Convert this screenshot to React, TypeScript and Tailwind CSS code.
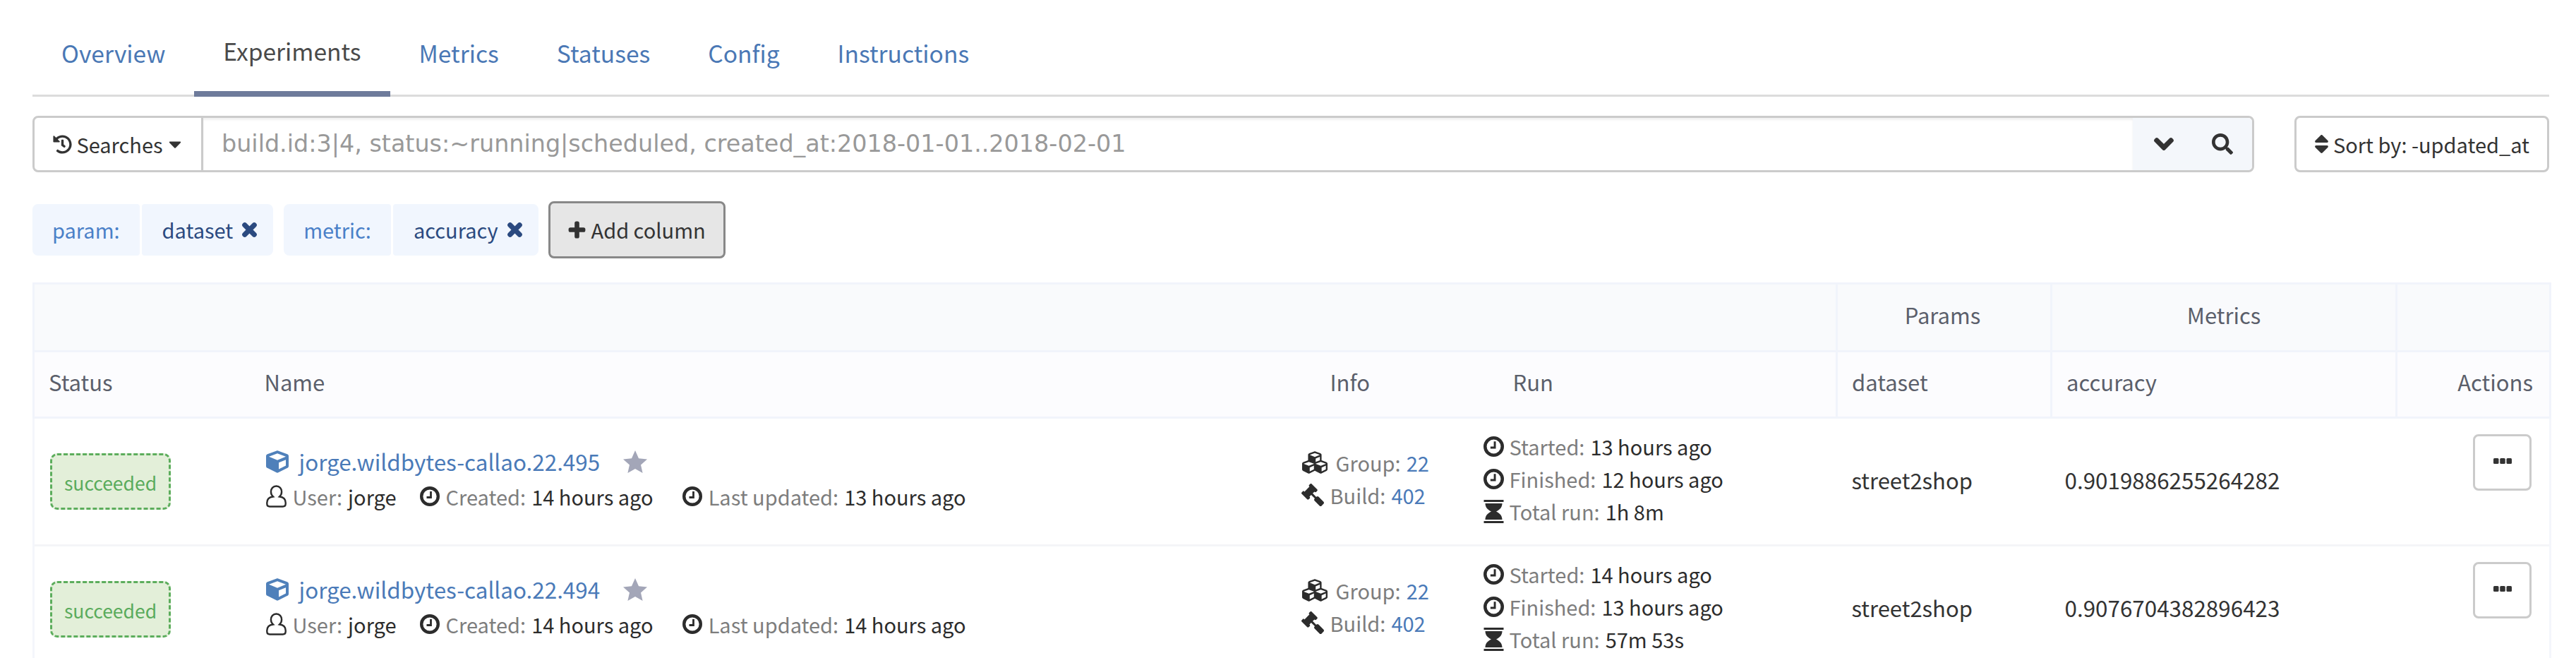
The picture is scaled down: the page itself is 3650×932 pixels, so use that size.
import {
  FaCaretDown,
  FaChevronDown,
  FaCube,
  FaCubes,
  FaGavel,
  FaHistory,
  FaPlus,
  FaSearch,
  FaSort,
} from 'react-icons/fa'

const TABS = ['Overview', 'Experiments', 'Metrics', 'Statuses', 'Config', 'Instructions']

const ROWS = [
  {
    name: 'jorge.wildbytes-callao.22.495',
    updated: '13 hours ago',
    started: '13 hours ago',
    finished: '12 hours ago',
    total: '1h 8m',
    accuracy: '0.9019886255264282',
  },
  {
    name: 'jorge.wildbytes-callao.22.494',
    updated: '14 hours ago',
    started: '14 hours ago',
    finished: '13 hours ago',
    total: '57m 53s',
    accuracy: '0.9076704382896423',
  },
]

// font-awesome 4 shapes that the icon packages no longer carry
function ClockIcon({ className }: { className: string }) {
  return (
    <svg viewBox="0 0 28 28" className={className} fill="none" stroke="currentColor">
      <circle cx="14" cy="14" r="11.8" strokeWidth="4.4" />
      <path d="M15.5 7v8.5H9.5" strokeWidth="2.8" />
    </svg>
  )
}

function UserIcon({ className }: { className: string }) {
  return (
    <svg viewBox="0 0 29 32" className={className} fill="none" stroke="currentColor" strokeWidth="2.4">
      <path d="M14.5 1.5c-4.6 0-7.6 3.6-7.6 8 0 3 1.2 5.4 3 7-4.6.6-8.6 2.6-8.6 8.6v1.4c0 2.4 1.6 4 4 4h18.400c2.400 0 4-1.600 4-4v-1.400c0-6-4-8-8.600-8.600 1.800-1.600 3-4 3-7 0-4.400-3-8-7.600-8z" />
    </svg>
  )
}

function StarIcon({ className }: { className: string }) {
  return (
    <svg viewBox="0 0 34 32" className={className} fill="currentColor">
      <path d="M17 0l5 11.200 12 1.300-9 8 2.600 11.500L17 26l-10.600 6L9 20.500l-9-8 12-1.300z" />
    </svg>
  )
}

function HourglassIcon({ className }: { className: string }) {
  return (
    <svg viewBox="0 0 28 33" className={className} fill="currentColor">
      <path d="M0 0h28v3H0zM0 30h28v3H0zM2 5h24c0 5-3 9-8.500 11.500C23 19 26 23 26 28H2c0-5 3-9 8.500-11.500C5 14 2 10 2 5z" />
    </svg>
  )
}

function CrossIcon({ className }: { className: string }) {
  return (
    <svg viewBox="0 0 24 24" className={className} fill="none" stroke="currentColor" strokeWidth="7.500" strokeLinecap="round">
      <path d="M5 5l14 14M19 5L5 19" />
    </svg>
  )
}

function DotsIcon({ className }: { className: string }) {
  return (
    <svg viewBox="0 0 26 8" className={className} fill="currentColor">
      <rect x="0" width="7.500" height="8" rx="1.500" />
      <rect x="9.250" width="7.500" height="8" rx="1.500" />
      <rect x="18.500" width="7.500" height="8" rx="1.500" />
    </svg>
  )
}

function Chip({ label, value }: { label: string; value: string }) {
  return (
    <div className="flex gap-[3px] text-[29px]">
      <span className="flex h-[73px] items-center rounded-l-[8px] rounded-r-[4px] bg-[#f1f6fe] px-[28px] text-[#4a80c8]">
        {label}
      </span>
      <span className="flex h-[73px] items-center gap-[12px] rounded-l-[4px] rounded-r-[8px] bg-[#f1f6fe] pl-[29px] pr-[22px] text-[#2b4a80]">
        {value}
        <CrossIcon className="h-[23px] w-[23px] text-[#2b4a80]" />
      </span>
    </div>
  )
}

function Meta({ icon, label, value }: { icon: React.ReactNode; label: string; value: string }) {
  return (
    <span className="flex items-center whitespace-nowrap text-[29px]">
      {icon}
      <span className="text-[#7d7d7d]">{label}</span>
      <span className="ml-[8px] text-[#2c2c2c]">{value}</span>
    </span>
  )
}

export default function App() {
  return (
    <div className="h-[932px] w-[3650px] overflow-hidden bg-white pl-[46px] pr-[38px] font-['Noto_Sans_CJK_SC',sans-serif] text-[30px] leading-[46px] text-[#333]">
      <nav className="flex h-[137px] items-end border-b-[3px] border-[#dcdcdc]">
        {TABS.map((tab) => (
          <a
            key={tab}
            className={
              tab === 'Experiments'
                ? 'relative -mb-[3px] flex h-[137px] items-center border-b-[8px] border-[#6e7b9b] px-[41px] pt-[14px] text-[33.600px] text-[#4a4a4a]'
                : 'flex h-[134px] items-center px-[41px] pt-[16px] text-[33.600px] text-[#4a78b5]'
            }
          >
            {tab}
          </a>
        ))}
      </nav>

      <div className="mt-[27px] flex items-stretch justify-between">
        <div className="flex h-[80px] w-[3148px] rounded-[8px] border-[3px] border-[#cbcbcb]">
          <button className="flex w-[239px] items-center justify-center gap-[6px] border-r-[3px] border-[#cbcbcb] text-[29px] text-[#333]">
            <FaHistory className="h-[27px] w-[27px]" />
            Searches
            <FaCaretDown className="h-[28px] w-[22px]" />
          </button>
          <div className="flex flex-1 items-center pl-[26px] font-['DejaVu_Sans',sans-serif] text-[33.400px] text-[#999] shadow-[inset_0_3px_3px_rgba(0,0,0,0.06)]">
            build.id:3|4, status:~running|scheduled, created_at:2018-01-01..2018-02-01
          </div>
          <div className="flex w-[169px] items-center rounded-r-[6px] bg-[#f4f7fb] pl-[29px]">
            <FaChevronDown className="h-[30px] w-[30px] text-[#333]" stroke="currentColor" strokeWidth={40} />
            <FaSearch className="ml-[53px] h-[30px] w-[30px] text-[#333]" />
          </div>
        </div>
        <button className="flex h-[80px] w-[361px] items-center justify-center gap-[6px] rounded-[8px] border-[3px] border-[#cbcbcb] text-[29px] text-[#333]">
          <FaSort className="h-[36px] w-[21px]" />
          Sort by: -updated_at
        </button>
      </div>

      <div className="mt-[41px] flex h-[80px] items-center gap-[15px]">
        <Chip label="param:" value="dataset" />
        <Chip label="metric:" value="accuracy" />
        <button className="-ml-[1px] flex h-[81px] w-[251px] items-center justify-center gap-[8px] rounded-[8px] border-[3px] border-[#888] bg-[#e6e6e6] text-[29px] text-[#333]">
          <FaPlus className="h-[25px] w-[25px]" stroke="currentColor" strokeWidth={40} />
          Add column
        </button>
      </div>

      <table className="mt-[35px] w-[3566px] table-fixed border-collapse">
        <colgroup>
          <col className="w-[305px]" />
          <col className="w-[1468px]" />
          <col className="w-[259px]" />
          <col className="w-[523px]" />
          <col className="w-[304px]" />
          <col className="w-[489px]" />
          <col className="w-[218px]" />
        </colgroup>
        <thead className="bg-[#f9fafc] text-[31px] font-normal text-[#5b5f6b]">
          <tr className="h-[96px] border-b-[3px] border-[#f1f4fb]">
            <th colSpan={4} className="border-x-[3px] border-t-[3px] border-[#f1f4fb]" />
            <th className="border-x-[3px] border-t-[3px] border-[#f1f4fb] pb-[8px] pr-[4px] font-normal">Params</th>
            <th className="border-x-[3px] border-t-[3px] border-[#f1f4fb] pb-[8px] font-normal">Metrics</th>
            <th className="border-x-[3px] border-t-[3px] border-[#f1f4fb]" />
          </tr>
          <tr className="h-[94px] border-b-[3px] border-[#f1f4fb] bg-[#fcfcfe]">
            <th className="border-l-[3px] border-[#f1f4fb] pb-[8px] pl-[20px] text-left font-normal">Status</th>
            <th className="pb-[8px] pl-[22px] text-left font-normal">Name</th>
            <th className="pb-[8px] pl-[64px] text-left font-normal">Info</th>
            <th className="pb-[8px] pl-[64px] text-left font-normal">Run</th>
            <th className="border-l-[3px] border-[#f1f4fb] pb-[8px] pl-[20px] text-left font-normal">dataset</th>
            <th className="border-l-[3px] border-[#f1f4fb] pb-[8px] pl-[20px] text-left font-normal">accuracy</th>
            <th className="border-x-[3px] border-[#f1f4fb] pb-[8px] pr-[23px] text-right font-normal">Actions</th>
          </tr>
        </thead>
        <tbody>
          {ROWS.map((row) => (
            <tr key={row.name} className="h-[181px] border-b-[3px] border-[#f4f5f8]">
              <td className="border-l-[3px] border-[#f4f6fb] pl-[22px]">
                <span className="flex h-[80px] w-[171px] items-center justify-center rounded-[10px] border-[3px] border-dashed border-[#5cad5c] bg-[#e3efd9] pt-[4px] text-[26.500px] text-[#5aab5c]">
                  succeeded
                </span>
              </td>
              <td className="pb-[8px] pl-[24px]">
                <div className="flex items-center text-[31.400px] text-[#4a7ab8]">
                  <FaCube className="mr-[15px] h-[32px] w-[32px] text-[#4f80ba]" />
                  {row.name}
                  <StarIcon className="ml-[33px] h-[32px] w-[34px] text-[#a3a6b8]" />
                </div>
                <div className="mt-[3px] flex items-center gap-[41px]">
                  <div className="-mr-[8px]">
                    <Meta icon={<UserIcon className="mr-[9px] h-[32px] w-[29px] text-[#2c2c2c]" />} label="User:" value="jorge" />
                  </div>
                  <Meta icon={<ClockIcon className="mr-[9px] h-[28px] w-[28px] text-[#2c2c2c]" />} label="Created:" value="14 hours ago" />
                  <Meta icon={<ClockIcon className="mr-[9px] h-[28px] w-[28px] text-[#2c2c2c]" />} label="Last updated:" value={row.updated} />
                </div>
              </td>
              <td className="pb-[8px] pl-[22px] text-[29px]">
                <div className="flex items-center">
                  <FaCubes className="mr-[10px] h-[36px] w-[40px] text-[#2c2c2c]" />
                  <span className="text-[#7d7d7d]">Group:</span>
                  <span className="ml-[8px] text-[#4a7ab8]">22</span>
                </div>
                <div className="flex items-center">
                  <FaGavel className="mr-[8px] h-[32px] w-[34px] -scale-x-100 text-[#2c2c2c]" />
                  <span className="text-[#7d7d7d]">Build:</span>
                  <span className="ml-[8px] text-[#4a7ab8]">402</span>
                </div>
              </td>
              <td className="pb-[8px] pl-[22px]">
                <Meta icon={<ClockIcon className="mr-[8px] h-[29px] w-[29px] text-[#2c2c2c]" />} label="Started:" value={row.started} />
                <Meta icon={<ClockIcon className="mr-[8px] h-[29px] w-[29px] text-[#2c2c2c]" />} label="Finished:" value={row.finished} />
                <Meta icon={<HourglassIcon className="mr-[8px] h-[33px] w-[29px] text-[#2c2c2c]" />} label="Total run:" value={row.total} />
              </td>
              <td className="pb-[4px] pl-[21px] text-[31px] text-[#333]">street2shop</td>
              <td className="pb-[4px] pl-[19px] text-[31.400px] text-[#333]">{row.accuracy}</td>
              <td className="border-r-[3px] border-[#f4f6fb] pr-[25px] align-top">
                <button className="ml-auto mt-[22px] flex h-[80px] w-[83px] items-center justify-center rounded-[8px] border-[3px] border-[#cbcbcb] pb-[4px]">
                  <DotsIcon className="h-[8px] w-[26px] text-[#333]" />
                </button>
              </td>
            </tr>
          ))}
        </tbody>
      </table>
    </div>
  )
}
